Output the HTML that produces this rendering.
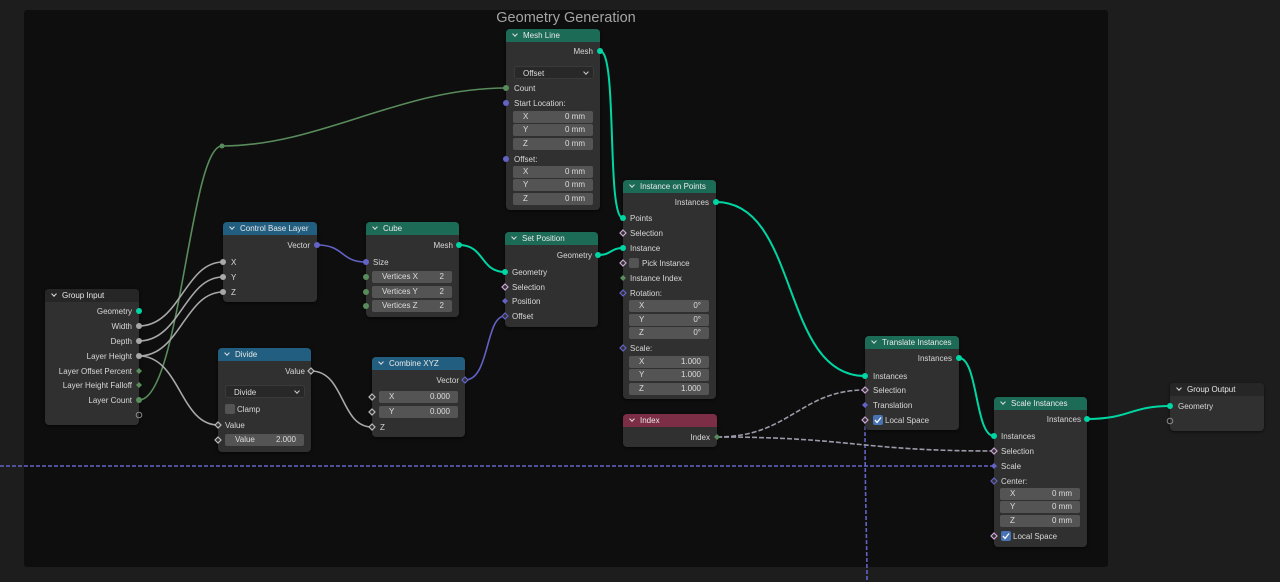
<!DOCTYPE html>
<html><head><meta charset="utf-8"><style>
body{margin:0;width:1280px;height:582px;overflow:hidden;background:#1d1d1d;font-family:"Liberation Sans",sans-serif;position:relative}
.frame{position:absolute;left:24px;top:10px;width:1084px;height:557px;background:#0e0e0e;border-radius:3px}
.ft{position:absolute;left:24px;top:10px;width:1084px;text-align:center;color:#a4a4a4;font-size:14.5px}
.n{position:absolute;background:#303030;border-radius:4px;box-shadow:0 1px 3px rgba(0,0,0,.6);z-index:1}
.h{height:13px;line-height:13px;border-radius:4px 4px 0 0;color:#e8e8e8;font-size:8px;padding-left:17px;position:relative}
.h:before{content:"";position:absolute;left:7px;top:3px;width:3px;height:3px;border-right:1px solid #ddd;border-bottom:1px solid #ddd;transform:rotate(45deg)}
.g{background:#1c6b57}.b{background:#215e80}.r{background:#7d2e47}.k{background:#262626}
.t{position:absolute;font-size:8px;line-height:12px;color:#d8d8d8;z-index:2;white-space:nowrap;transform:translateY(1px)}
.ra{text-align:right}
.f{position:absolute;height:12px;line-height:12px;background:#545454;border-radius:2px;font-size:8px;color:#ddd;z-index:2;box-sizing:border-box;padding:0 8px 0 10px}
.f span{float:right}
.d{position:absolute;height:13px;line-height:13px;background:#282828;border:1px solid #3a3a3a;border-radius:3px;font-size:8px;color:#ddd;z-index:2;box-sizing:border-box;padding-left:8px}
.d:after{content:"";position:absolute;right:5px;top:3px;width:3px;height:3px;border-right:1px solid #ccc;border-bottom:1px solid #ccc;transform:rotate(45deg)}
.cb{position:absolute;width:10px;height:10px;background:#545454;border-radius:2px;z-index:2}
.cb.on{background:#4772b3}
svg{position:absolute;left:0;top:0}
</style></head><body>
<div class="frame"></div>
<div class="ft">Geometry Generation</div>

<svg width="1280" height="582" style="z-index:0" fill="none" stroke-width="1.6">
<path d="M0 466 L994 466" stroke="#6363c7" stroke-dasharray="4 2"/>
<path d="M865 420 C865 500 867 540 867 582" stroke="#6363c7" stroke-dasharray="4 2"/>
<path d="M600 51 C618 51 606 218 623 218" stroke="#00d6a3" stroke-width="2"/>
<path d="M139 400 C180 400 190 146 222 146 C320 146 400 88 506 88" stroke="#598c5c"/>
<path d="M139 326 C180 326 185 262 223 262" stroke="#a8a8a8"/>
<path d="M139 341 C180 341 185 277 223 277" stroke="#a8a8a8"/>
<path d="M139 356 C180 356 185 292 223 292" stroke="#a8a8a8"/>
<path d="M139 356 C180 356 180 425 218 425" stroke="#a8a8a8"/>
<path d="M317 245 C345 245 340 262 366 262" stroke="#6363c7"/>
<path d="M459 245 C485 245 480 272 505 272" stroke="#00d6a3" stroke-width="2"/>
<path d="M311 371 C345 371 340 427 372 427" stroke="#a8a8a8"/>
<path d="M465 380 C490 380 485 316 505 316" stroke="#6363c7"/>
<path d="M598 255 C612 255 610 248 623 248" stroke="#00d6a3" stroke-width="2"/>
<path d="M716 202 C800 202 780 376 865 376" stroke="#00d6a3" stroke-width="2"/>
<path d="M717 437 C790 437 800 390 865 390" stroke="#9a9aa8" stroke-dasharray="5 2"/>
<path d="M717 437 C850 437 860 451 994 451" stroke="#9a9aa8" stroke-dasharray="5 2"/>
<path d="M959 358 C978 358 975 436 994 436" stroke="#00d6a3" stroke-width="2"/>
<path d="M1087 419 C1130 419 1130 406 1170 406" stroke="#00d6a3" stroke-width="2"/>
</svg>

<div class="n" style="left:506px;top:29px;width:94px;height:181px"><div class="h g">Mesh Line</div></div>
<div class="t ra" style="left:506px;top:45px;width:87px">Mesh</div>
<div class="d" style="left:514px;top:66px;width:80px">Offset</div>
<div class="t" style="left:514px;top:82px">Count</div>
<div class="t" style="left:514px;top:97px">Start Location:</div>
<div class="f" style="left:513px;top:111px;width:80px">X<span>0 mm</span></div>
<div class="f" style="left:513px;top:124px;width:80px">Y<span>0 mm</span></div>
<div class="f" style="left:513px;top:138px;width:80px">Z<span>0 mm</span></div>
<div class="t" style="left:514px;top:153px">Offset:</div>
<div class="f" style="left:513px;top:166px;width:80px">X<span>0 mm</span></div>
<div class="f" style="left:513px;top:179px;width:80px">Y<span>0 mm</span></div>
<div class="f" style="left:513px;top:193px;width:80px">Z<span>0 mm</span></div>

<div class="n" style="left:623px;top:180px;width:93px;height:219px"><div class="h g">Instance on Points</div></div>
<div class="t ra" style="left:623px;top:196px;width:86px">Instances</div>
<div class="t" style="left:630px;top:212px">Points</div>
<div class="t" style="left:630px;top:227px">Selection</div>
<div class="t" style="left:630px;top:242px">Instance</div>
<div class="cb" style="left:629px;top:258px"></div>
<div class="t" style="left:642px;top:257px">Pick Instance</div>
<div class="t" style="left:630px;top:272px">Instance Index</div>
<div class="t" style="left:630px;top:287px">Rotation:</div>
<div class="f" style="left:629px;top:300px;width:80px">X<span>0°</span></div>
<div class="f" style="left:629px;top:314px;width:80px">Y<span>0°</span></div>
<div class="f" style="left:629px;top:327px;width:80px">Z<span>0°</span></div>
<div class="t" style="left:630px;top:342px">Scale:</div>
<div class="f" style="left:629px;top:356px;width:80px">X<span>1.000</span></div>
<div class="f" style="left:629px;top:369px;width:80px">Y<span>1.000</span></div>
<div class="f" style="left:629px;top:383px;width:80px">Z<span>1.000</span></div>

<div class="n" style="left:223px;top:222px;width:94px;height:80px"><div class="h b">Control Base Layer</div></div>
<div class="t ra" style="left:223px;top:239px;width:87px">Vector</div>
<div class="t" style="left:231px;top:256px">X</div>
<div class="t" style="left:231px;top:271px">Y</div>
<div class="t" style="left:231px;top:286px">Z</div>

<div class="n" style="left:366px;top:222px;width:93px;height:95px"><div class="h g">Cube</div></div>
<div class="t ra" style="left:366px;top:239px;width:87px">Mesh</div>
<div class="t" style="left:373px;top:256px">Size</div>
<div class="f" style="left:372px;top:271px;width:80px">Vertices X<span>2</span></div>
<div class="f" style="left:372px;top:286px;width:80px">Vertices Y<span>2</span></div>
<div class="f" style="left:372px;top:300px;width:80px">Vertices Z<span>2</span></div>

<div class="n" style="left:505px;top:232px;width:93px;height:95px"><div class="h g">Set Position</div></div>
<div class="t ra" style="left:505px;top:249px;width:87px">Geometry</div>
<div class="t" style="left:512px;top:266px">Geometry</div>
<div class="t" style="left:512px;top:281px">Selection</div>
<div class="t" style="left:512px;top:295px">Position</div>
<div class="t" style="left:512px;top:310px">Offset</div>

<div class="n" style="left:45px;top:289px;width:94px;height:136px"><div class="h k">Group Input</div></div>
<div class="t ra" style="left:45px;top:305px;width:87px">Geometry</div>
<div class="t ra" style="left:45px;top:320px;width:87px">Width</div>
<div class="t ra" style="left:45px;top:335px;width:87px">Depth</div>
<div class="t ra" style="left:45px;top:350px;width:87px">Layer Height</div>
<div class="t ra" style="left:45px;top:365px;width:87px">Layer Offset Percent</div>
<div class="t ra" style="left:45px;top:379px;width:87px">Layer Height Falloff</div>
<div class="t ra" style="left:45px;top:394px;width:87px">Layer Count</div>

<div class="n" style="left:218px;top:348px;width:93px;height:104px"><div class="h b">Divide</div></div>
<div class="t ra" style="left:218px;top:365px;width:87px">Value</div>
<div class="d" style="left:225px;top:385px;width:80px">Divide</div>
<div class="cb" style="left:225px;top:404px"></div>
<div class="t" style="left:237px;top:403px">Clamp</div>
<div class="t" style="left:225px;top:419px">Value</div>
<div class="f" style="left:225px;top:434px;width:79px">Value<span>2.000</span></div>

<div class="n" style="left:372px;top:357px;width:93px;height:80px"><div class="h b">Combine XYZ</div></div>
<div class="t ra" style="left:372px;top:374px;width:87px">Vector</div>
<div class="f" style="left:379px;top:391px;width:79px">X<span>0.000</span></div>
<div class="f" style="left:379px;top:406px;width:79px">Y<span>0.000</span></div>
<div class="t" style="left:380px;top:421px">Z</div>

<div class="n" style="left:623px;top:414px;width:94px;height:33px"><div class="h r">Index</div></div>
<div class="t ra" style="left:623px;top:431px;width:87px">Index</div>

<div class="n" style="left:865px;top:336px;width:94px;height:94px"><div class="h g">Translate Instances</div></div>
<div class="t ra" style="left:865px;top:352px;width:87px">Instances</div>
<div class="t" style="left:873px;top:370px">Instances</div>
<div class="t" style="left:873px;top:384px">Selection</div>
<div class="t" style="left:873px;top:399px">Translation</div>
<div class="cb on" style="left:873px;top:415px"></div>
<div class="t" style="left:885px;top:414px">Local Space</div>

<div class="n" style="left:994px;top:397px;width:93px;height:150px"><div class="h g">Scale Instances</div></div>
<div class="t ra" style="left:994px;top:413px;width:87px">Instances</div>
<div class="t" style="left:1001px;top:430px">Instances</div>
<div class="t" style="left:1001px;top:445px">Selection</div>
<div class="t" style="left:1001px;top:460px">Scale</div>
<div class="t" style="left:1001px;top:475px">Center:</div>
<div class="f" style="left:1000px;top:488px;width:80px">X<span>0 mm</span></div>
<div class="f" style="left:1000px;top:501px;width:80px">Y<span>0 mm</span></div>
<div class="f" style="left:1000px;top:515px;width:80px">Z<span>0 mm</span></div>
<div class="cb on" style="left:1001px;top:531px"></div>
<div class="t" style="left:1013px;top:530px">Local Space</div>

<div class="n" style="left:1170px;top:383px;width:94px;height:48px"><div class="h k">Group Output</div></div>
<div class="t" style="left:1178px;top:400px">Geometry</div>

<svg width="1280" height="582" style="z-index:3" stroke-width="1">
<g fill="#00d6a3"><circle cx="600" cy="51" r="3"/><circle cx="623" cy="218" r="3"/><circle cx="623" cy="248" r="3"/><circle cx="716" cy="202" r="3"/><circle cx="459" cy="245" r="3"/><circle cx="505" cy="272" r="3"/><circle cx="598" cy="255" r="3"/><circle cx="139" cy="311" r="3"/><circle cx="959" cy="358" r="3"/><circle cx="865" cy="376" r="3"/><circle cx="1087" cy="419" r="3"/><circle cx="994" cy="436" r="3"/><circle cx="1170" cy="406" r="3"/></g>
<g fill="#598c5c"><circle cx="506" cy="88" r="3"/><circle cx="222" cy="146" r="2.5"/><circle cx="366" cy="277" r="3"/><circle cx="366" cy="292" r="3"/><circle cx="366" cy="306" r="3"/><circle cx="139" cy="400" r="3"/></g>
<g fill="#6363c7"><circle cx="506" cy="103" r="3"/><circle cx="506" cy="159" r="3"/><circle cx="317" cy="245" r="3"/><circle cx="366" cy="262" r="3"/></g>
<g fill="#a8a8a8"><circle cx="139" cy="326" r="3"/><circle cx="139" cy="341" r="3"/><circle cx="139" cy="356" r="3"/><circle cx="223" cy="262" r="3"/><circle cx="223" cy="277" r="3"/><circle cx="223" cy="292" r="3"/></g>
<g stroke="#888" fill="none"><circle cx="139" cy="415" r="2.8"/><circle cx="1170" cy="421" r="2.8"/></g>
<g fill="#303030" stroke="#cca6d6" stroke-width="1.2">
<path d="M623 230l3 3-3 3-3-3z"/><path d="M623 260l3 3-3 3-3-3z"/><path d="M505 284l3 3-3 3-3-3z"/><path d="M865 387l3 3-3 3-3-3z"/><path d="M865 417l3 3-3 3-3-3z"/><path d="M994 448l3 3-3 3-3-3z"/><path d="M994 533l3 3-3 3-3-3z"/>
</g>
<g fill="#303030" stroke="#6363c7" stroke-width="1.2">
<path d="M623 290l3 3-3 3-3-3z"/><path d="M623 345l3 3-3 3-3-3z"/><path d="M505 313l3 3-3 3-3-3z"/><path d="M465 377l3 3-3 3-3-3z"/><path d="M994 478l3 3-3 3-3-3z"/>
</g>
<g fill="#6363c7"><path d="M505 298l3 3-3 3-3-3z"/><path d="M865 402l3 3-3 3-3-3z"/><path d="M994 463l3 3-3 3-3-3z"/></g>
<g fill="#598c5c"><path d="M623 275l3 3-3 3-3-3z"/><path d="M139 368l3 3-3 3-3-3z"/><path d="M139 382l3 3-3 3-3-3z"/><path d="M717 434l3 3-3 3-3-3z"/></g>
<g fill="#303030" stroke="#bbb" stroke-width="1.2">
<path d="M311 368l3 3-3 3-3-3z"/><path d="M218 422l3 3-3 3-3-3z"/><path d="M218 437l3 3-3 3-3-3z"/><path d="M372 394l3 3-3 3-3-3z"/><path d="M372 409l3 3-3 3-3-3z"/><path d="M372 424l3 3-3 3-3-3z"/>
</g>
<g stroke="#fff" fill="none" stroke-width="1.3"><path d="M875 420l2 2.5 4-5"/><path d="M1003 536l2 2.5 4-5"/></g>
</svg>
</body></html>
